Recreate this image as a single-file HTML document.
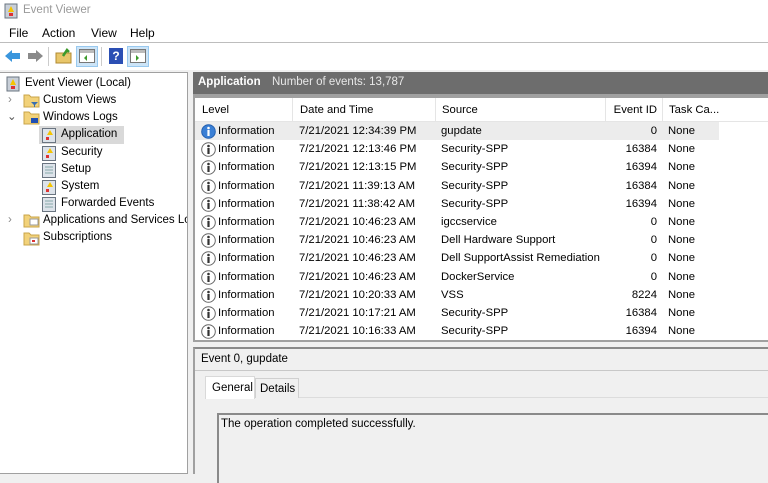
<!DOCTYPE html>
<html><head><meta charset="utf-8"><style>
*{margin:0;padding:0;box-sizing:border-box}
body{width:768px;height:474px;overflow:hidden;background:#f0f0f0;font-family:"Liberation Sans",sans-serif;font-size:12px;color:#000;position:relative}
.abs{position:absolute}
#title{left:0;top:0;width:768px;height:22px;background:#fff}
#menu{left:0;top:22px;width:768px;height:21px;background:#fff;border-bottom:1px solid #bdbdbd}
#menu span{position:absolute;top:4px}
#tb{left:0;top:43px;width:768px;height:27px;background:#fff}
#left{left:0;top:72px;width:188px;height:402px;background:#fff;border:1px solid #a0a0a0;border-left:none;overflow:hidden;font-size:11.5px}
.tn{position:absolute;white-space:nowrap;height:17px;line-height:17px}
#hdr{left:193px;top:72px;width:575px;height:22px;background:#6d6d6d;color:#fff;font-size:11.5px}
#grid{left:193px;top:94px;width:575px;height:248px;background:#fff;border:2px solid #a0a0a0;border-right:none;border-top:4px solid #a0a0a0;font-size:11.3px}
.row{position:absolute;left:0;height:18px;line-height:18px;white-space:nowrap;width:575px}
.c{position:absolute;top:0}
.ico{position:absolute;left:6px;top:2px;width:15px;height:15px}
#det{left:193px;top:347px;width:575px;height:127px;background:#f0f0f0;border-top:2px solid #8a8a8a;border-left:2px solid #a0a0a0;font-size:11.5px}
</style></head><body>
<div id="title" class="abs">
<svg class="abs" style="left:4px;top:3px" width="14" height="16"><rect x="1" y="1" width="12" height="14" fill="#c8cfd8" stroke="#6a7480"/><path d="M7 3 L10 9 L4 9Z" fill="#f5c400"/><rect x="5" y="10" width="4" height="3" fill="#d33"/></svg>
<span class="abs" style="left:23px;top:4px;color:#999;font-size:11.5px">Event Viewer</span></div>
<div id="menu" class="abs"><span style="left:9px">File</span><span style="left:42px">Action</span><span style="left:91px">View</span><span style="left:130px">Help</span></div>
<div id="tb" class="abs">
<svg class="abs" style="left:4px;top:5px" width="40" height="16"><path d="M1 8 L8 2 L8 5 L16 5 L16 11 L8 11 L8 14Z" fill="#3a96dd"/><path d="M39 8 L32 2 L32 5 L24 5 L24 11 L32 11 L32 14Z" fill="#8a8a8a"/></svg>
<div class="abs" style="left:48px;top:4px;width:1px;height:19px;background:#ccc"></div>
<svg class="abs" style="left:55px;top:4px" width="18" height="18"><rect x="1" y="6" width="15" height="10" fill="#e8c66a" stroke="#b08a30"/><path d="M8 9 L12 3 L14 5" stroke="#3c9a2c" stroke-width="2.5" fill="none"/></svg>
<div class="abs" style="left:76px;top:3px;width:22px;height:21px;background:#cce4f7;border:1px solid #99c9ef"></div>
<svg class="abs" style="left:79px;top:6px" width="16" height="14"><rect x="0.5" y="0.5" width="15" height="13" fill="#fff" stroke="#777"/><rect x="1" y="1" width="14" height="3" fill="#bbb"/><path d="M8 6 L5 9 L8 12Z" fill="#3c9a2c"/></svg>
<div class="abs" style="left:101px;top:4px;width:1px;height:19px;background:#ccc"></div>
<div class="abs" style="left:109px;top:5px;width:14px;height:16px;background:#2b4fb4;color:#fff;font-weight:bold;text-align:center;line-height:16px;font-size:12px">?</div>
<div class="abs" style="left:127px;top:3px;width:22px;height:21px;background:#cce4f7;border:1px solid #99c9ef"></div>
<svg class="abs" style="left:130px;top:6px" width="16" height="14"><rect x="0.5" y="0.5" width="15" height="13" fill="#fff" stroke="#777"/><rect x="1" y="1" width="14" height="3" fill="#bbb"/><path d="M6 6 L9 9 L6 12Z" fill="#3c9a2c"/></svg>
</div>
<div id="left" class="abs">
<svg class="abs" style="left:6px;top:3px" width="14" height="16"><rect x="1" y="1" width="12" height="14" fill="#c8cfd8" stroke="#6a7480"/><path d="M7 3 L10 9 L4 9Z" fill="#f5c400"/><rect x="5" y="10" width="4" height="3" fill="#d33"/></svg>
<div class="tn" style="left:25px;top:2px">Event Viewer (Local)</div>
<div class="tn" style="left:8px;top:19px;color:#888">›</div>
<svg class="abs" style="left:23px;top:20px" width="17" height="15"><path d="M1 2 H6 L8 4 H16 V14 H1Z" fill="#f2d27a" stroke="#c9a448"/><path d="M8 9 H15 L12 12 V14 H11 V12Z" fill="#3a6fb0"/></svg>
<div class="tn" style="left:43px;top:19px">Custom Views</div>
<div class="tn" style="left:7px;top:36px;color:#555">⌄</div>
<svg class="abs" style="left:23px;top:37px" width="17" height="15"><path d="M1 2 H6 L8 4 H16 V14 H1Z" fill="#f2d27a" stroke="#c9a448"/><rect x="8" y="8" width="7" height="5" fill="#1f4fb4"/></svg>
<div class="tn" style="left:43px;top:36px">Windows Logs</div>
<div class="abs" style="left:39px;top:53px;width:85px;height:18px;background:#d9d9d9"></div>
<div class="tn" style="left:61px;top:53px">Application</div>
<div class="tn" style="left:61px;top:71px">Security</div>
<div class="tn" style="left:61px;top:88px">Setup</div>
<div class="tn" style="left:61px;top:105px">System</div>
<div class="tn" style="left:61px;top:122px">Forwarded Events</div>
<svg class="abs" style="left:42px;top:55px" width="14" height="150">
<g><rect x="0.5" y="0.5" width="13" height="14" fill="#dde3ea" stroke="#6a7480"/><path d="M8 2 L11 7 L5 7Z" fill="#f5c400"/><rect x="4" y="9" width="3" height="3" fill="#d33"/></g>
<g transform="translate(0,18)"><rect x="0.5" y="0.5" width="13" height="14" fill="#dde3ea" stroke="#6a7480"/><path d="M8 2 L11 7 L5 7Z" fill="#f5c400"/><rect x="4" y="9" width="3" height="3" fill="#d33"/></g>
<g transform="translate(0,35)"><rect x="0.5" y="0.5" width="13" height="14" fill="#dde3ea" stroke="#6a7480"/><path d="M3 4H11M3 7H11M3 10H11" stroke="#8aa"/></g>
<g transform="translate(0,52)"><rect x="0.5" y="0.5" width="13" height="14" fill="#dde3ea" stroke="#6a7480"/><path d="M8 2 L11 7 L5 7Z" fill="#f5c400"/><rect x="4" y="9" width="3" height="3" fill="#d33"/></g>
<g transform="translate(0,69)"><rect x="0.5" y="0.5" width="13" height="14" fill="#dde3ea" stroke="#6a7480"/><path d="M3 4H11M3 7H11M3 10H11" stroke="#8aa"/></g>
</svg>
<div class="tn" style="left:8px;top:139px;color:#888">›</div>
<svg class="abs" style="left:23px;top:140px" width="17" height="15"><path d="M1 2 H6 L8 4 H16 V14 H1Z" fill="#f2d27a" stroke="#c9a448"/><rect x="7" y="6" width="8" height="6" fill="#fff" stroke="#999"/></svg>
<div class="tn" style="left:43px;top:139px">Applications and Services Logs</div>
<svg class="abs" style="left:23px;top:158px" width="17" height="15"><path d="M1 2 H6 L8 4 H16 V14 H1Z" fill="#f2d27a" stroke="#c9a448"/><rect x="7" y="7" width="8" height="6" fill="#fff" stroke="#999"/><rect x="9" y="9" width="3" height="2" fill="#d33"/></svg>
<div class="tn" style="left:43px;top:156px">Subscriptions</div>
</div>
<div id="hdr" class="abs"><span class="abs" style="left:5px;top:4px;font-weight:bold">Application</span><span class="abs" style="left:79px;top:4px;color:#e8e8e8">Number of events: 13,787</span></div>
<div id="grid" class="abs">
<div class="row" style="top:0;height:24px;line-height:24px;border-bottom:1px solid #e5e5e5">
<span class="c" style="left:7px">Level</span><span class="c" style="left:97px;padding-left:7px;border-left:1px solid #e5e5e5;height:24px;width:143px">Date and Time</span><span class="c" style="left:240px;padding-left:6px;border-left:1px solid #e5e5e5;height:24px;width:170px">Source</span><span class="c" style="left:410px;border-left:1px solid #e5e5e5;height:24px;width:57px;text-align:right;padding-right:5px">Event ID</span><span class="c" style="left:467px;padding-left:6px;border-left:1px solid #e5e5e5;height:24px;width:57px">Task Ca...</span></div>
<div id="rows"></div>
</div>
<div id="det" class="abs">
<div class="abs" style="left:0;top:0;width:575px;height:22px;border-bottom:1px solid #c8c8c8"><span class="abs" style="left:6px;top:4px">Event 0, gupdate</span></div>
<div class="abs" style="left:12px;top:48px;width:563px;height:80px;border-top:1px solid #dcdcdc"></div>
<div class="abs" style="left:60px;top:29px;width:44px;height:20px;border:1px solid #d0d0d0;border-bottom:none;background:#f0f0f0"><span class="abs" style="left:4px;top:4px">Details</span></div>
<div class="abs" style="left:10px;top:27px;width:50px;height:23px;background:#fff;border:1px solid #d9d9d9;border-bottom:none"><span class="abs" style="left:6px;top:5px">General</span></div>
<div class="abs" style="left:12px;top:50px;width:563px;height:80px;background:#f0f0f0"></div>
<div class="abs" style="left:22px;top:64px;width:553px;height:70px;border:2px solid #8a8a8a;border-right:none;border-bottom:none;background:#f0f0f0"><span class="abs" style="left:2px;top:3px">The operation completed successfully.</span></div>
</div>
<script>
var d=[["12:34:39 PM","gupdate","0"],["12:13:46 PM","Security-SPP","16384"],["12:13:15 PM","Security-SPP","16394"],["11:39:13 AM","Security-SPP","16384"],["11:38:42 AM","Security-SPP","16394"],["10:46:23 AM","igccservice","0"],["10:46:23 AM","Dell Hardware Support","0"],["10:46:23 AM","Dell SupportAssist Remediation","0"],["10:46:23 AM","DockerService","0"],["10:20:33 AM","VSS","8224"],["10:17:21 AM","Security-SPP","16384"],["10:16:33 AM","Security-SPP","16394"]];
var h="";d.forEach(function(r,i){var t=24+i*18.2;
h+='<div class="row" style="top:'+t+'px;'+(i==0?'background:#ececec;width:524px':'')+'"><svg class="ico" viewBox="0 0 15 15"><circle cx="7.5" cy="7.5" r="6.8" fill="'+(i==0?'#3a7fd5':'#fff')+'" stroke="'+(i==0?'#2460b0':'#666')+'"/><circle cx="7.5" cy="4" r="1.3" fill="'+(i==0?'#fff':'#333')+'"/><rect x="6.4" y="6" width="2.2" height="6" fill="'+(i==0?'#fff':'#333')+'"/></svg><span class="c" style="left:23px">Information</span><span class="c" style="left:104px">7/21/2021 '+r[0]+'</span><span class="c" style="left:246px">'+r[1]+'</span><span class="c" style="left:410px;width:57px;text-align:right;padding-right:5px">'+r[2]+'</span><span class="c" style="left:473px">None</span></div>';});
document.getElementById("rows").innerHTML=h;
</script>
</body></html>
